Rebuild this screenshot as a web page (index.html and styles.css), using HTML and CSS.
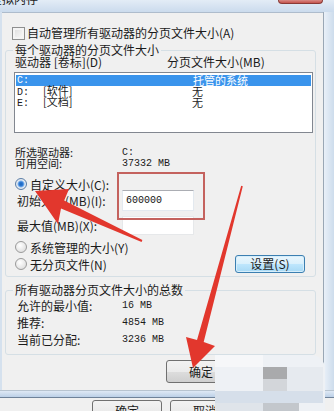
FILE: index.html
```html
<!DOCTYPE html>
<html lang="zh-CN">
<head>
  <meta charset="UTF-8">
  <meta name="viewport" content="width=device-width, initial-scale=1.0">
  <title>虚拟内存</title>
  <link rel="stylesheet" href="styles.css">
</head>
<body>
  <div class="screen">
    <div class="titlebar">
      <span class="title">虚拟内存</span>
      <span class="close"></span>
    </div>

    <div class="body">
      <div class="frame-left"></div>
      <div class="panel">
        <label class="check-row"><span class="checkbox"></span>自动管理所有驱动器的分页文件大小(A)</label>

        <fieldset class="group group-drive">
          <legend>每个驱动器的分页文件大小</legend>
          <div class="list-head">
            <span class="head-drive">驱动器 [卷标](D)</span>
            <span>分页文件大小(MB)</span>
          </div>
          <div class="listbox">
            <div class="list-row selected"><span class="col-drive mono">C:</span><span>托管的系统</span></div>
            <div class="list-row"><span class="col-drive"><span class="mono drive-letter">D:</span>[软件]</span><span>无</span></div>
            <div class="list-row"><span class="col-drive"><span class="mono drive-letter">E:</span>[文档]</span><span>无</span></div>
          </div>

          <div class="info-row first"><span class="info-label">所选驱动器:</span><span class="mono">C:</span></div>
          <div class="info-row"><span class="info-label">可用空间:</span><span class="mono">37332 MB</span></div>

          <div class="radio-row first"><span class="radio on"></span>自定义大小(C):</div>
          <div class="field-row"><span class="field-label">初始大小(MB)(I):</span><span class="input mono">600000</span></div>
          <div class="field-row second"><span class="field-label">最大值(MB)(X):</span><span class="input faint"></span></div>
          <div class="radio-row"><span class="radio"></span>系统管理的大小(Y)</div>
          <div class="radio-row last">
            <span class="radio-label"><span class="radio"></span>无分页文件(N)</span>
            <button class="btn btn-focus">设置(S)</button>
          </div>
        </fieldset>

        <fieldset class="group group-total">
          <legend>所有驱动器分页文件大小的总数</legend>
          <div class="total-row first"><span class="info-label">允许的最小值:</span><span class="mono">16 MB</span></div>
          <div class="total-row"><span class="info-label">推荐:</span><span class="mono">4854 MB</span></div>
          <div class="total-row last"><span class="info-label">当前已分配:</span><span class="mono">3236 MB</span></div>
        </fieldset>

        <div class="ok-row"><button class="btn btn-ok">确定</button></div>
      </div>
      <div class="frame-right"></div>
    </div>

    <div class="frame-bottom"></div>

    <div class="parent-buttons">
      <button class="btn btn-parent">确定</button>
      <button class="btn btn-parent">取消</button>
    </div>

    <!-- annotations drawn over the dialog -->
    <div class="mark-box"></div>

    <div class="blur">
      <span class="blk blk-white"></span>
      <span class="blk blk-light"></span>
      <span class="blk blk-dark"></span>
      <span class="blk blk-mid"></span>
      <span class="blk blk-blue"></span>
      <span class="blk blk-blue2"></span>
      <span class="blk blk-gray"></span>
    </div>

    <svg class="arrows" width="334" height="411" viewBox="0 0 334 411">
      <polygon points="35,191 69,189 64.2,200.5 142.4,240.1 141.6,241.9 61,208.5 58,224" />
      <polygon points="193,368 186,337 197,340.1 241.2,185.8 242.8,186.2 203.7,341.9 215,346" />
    </svg>
  </div>
</body>
</html>
```

FILE: styles.css
```css
* {
  box-sizing: border-box;
}

body {
  margin: 0;
  font-family: "Noto Sans CJK SC", "Noto Sans", sans-serif;
  font-size: 12px;
  color: #1b1b1b;
}

.screen {
  position: relative;
  width: 334px;
  height: 411px;
  overflow: hidden;
  background: #f0f0f0;
}

.mono {
  font-family: "Liberation Mono", "Noto Sans CJK SC", monospace;
  font-size: 10px;
}

/* title bar */
.titlebar {
  display: flex;
  height: 12px;
  overflow: hidden;
  background: linear-gradient(#e3ecf6, #cbdbed);
}

.title {
  margin-top: -8px;
  margin-left: -10px;
  line-height: 14px;
  color: #222;
}

.close {
  margin-left: auto;
  margin-right: 11px;
  width: 45px;
  height: 4px;
  border: 1px solid #8a3a36;
  border-top: none;
  border-radius: 0 0 4px 4px;
  background: linear-gradient(#d98b86, #c5534d);
}

/* window body */
.body {
  display: flex;
  height: 378px;
}

.frame-left {
  width: 2px;
  background: #d5e1ee;
}

.frame-right {
  width: 11px;
  border-left: 1px solid #9aa7b5;
  background: linear-gradient(90deg, #e9f0f8, #cddcec);
}

.panel {
  width: 321px;
  padding: 13px 7px 0 3px;
  border-top: 1px solid #aebccc;
  background: #f0f0f0;
}

.check-row {
  display: flex;
  align-items: center;
  height: 14px;
  padding-left: 7px;
  line-height: 14px;
}

.checkbox {
  width: 13px;
  height: 13px;
  margin-right: 2px;
  border: 1px solid #8e8f8f;
  background: linear-gradient(135deg, #dcdcdc, #fbfbfb);
  box-shadow: inset 0 0 0 2px #f4f4f4;
}

/* group boxes */
.group {
  margin: 0;
  padding: 0;
  border: 1px solid #d5dfe5;
  border-radius: 3px;
}

.group legend {
  margin-left: 7px;
  padding: 0 2px;
  line-height: 12px;
}

.group-drive {
  margin-top: 4px;
  padding-bottom: 3px;
}

.list-head {
  display: flex;
  height: 12px;
  padding-left: 9px;
  line-height: 12px;
}

.head-drive {
  width: 152px;
}

.listbox {
  height: 61px;
  margin: 4px 2px 0 8px;
  padding-top: 2px;
  border: 1px solid #828790;
  background: #fff;
}

.list-row {
  display: flex;
  align-items: center;
  height: 11px;
  padding-left: 2px;
  font-size: 11px;
  line-height: 11px;
}

.list-row.selected {
  margin: 0 1px;
  padding-left: 1px;
  background: #3a94ec;
  color: #fff;
}

.col-drive {
  width: 175px;
}

.list-row.selected .col-drive {
  width: 176px;
}

.drive-letter {
  display: inline-block;
  width: 26px;
}

.info-row {
  display: flex;
  align-items: center;
  height: 11px;
  padding-left: 9px;
  font-size: 11px;
  line-height: 11px;
}

.info-row.first {
  margin-top: 14px;
}

.info-label {
  width: 107px;
}

.radio-row {
  display: flex;
  align-items: center;
  height: 14px;
  margin-top: 4px;
  padding-left: 9px;
}

.radio-row.first {
  margin-top: 8px;
}

.radio-row.last {
  justify-content: space-between;
  height: 18px;
  margin-top: 1px;
  padding-right: 10px;
}

.radio-label {
  display: flex;
  align-items: center;
}

.radio {
  width: 12px;
  height: 12px;
  margin-right: 3px;
  border: 1px solid #9a9a9a;
  border-radius: 50%;
  background: radial-gradient(circle at 40% 35%, #ffffff, #d6d6d6);
}

.radio.on {
  border-color: #5c7fa8;
  background: radial-gradient(circle, #1c64b8 0, #2e7ad6 2px, #7fb2ea 3px, #e9eef4 4px, #d6dce2 6px);
}

.field-row {
  display: flex;
  align-items: center;
  height: 21px;
  margin-top: -1px;
  padding-left: 11px;
}

.field-row.second {
  margin-top: 4px;
}

.field-label {
  width: 105px;
}

.input {
  width: 72px;
  height: 21px;
  padding-left: 3px;
  border: 1px solid #e3e9ef;
  border-top-color: #abadb3;
  background: #fff;
  line-height: 19px;
  color: #111;
}

.input.faint {
  height: 19px;
  border-color: #e6e8ea;
}

/* buttons */
.btn {
  height: 18px;
  padding: 0;
  border: 1px solid #707070;
  border-radius: 3px;
  background: linear-gradient(#f2f2f2 0, #ebebeb 50%, #dddddd 51%, #cfcfcf 100%);
  font-family: "Noto Sans CJK SC", sans-serif;
  font-size: 12px;
  line-height: 16px;
  color: #1b1b1b;
}

.btn-focus {
  width: 70px;
  border-color: #3c7fb1;
  background: linear-gradient(#eaf6fd 0, #d9f0fc 50%, #bee6fd 51%, #a7d9f5 100%);
  box-shadow: inset 0 0 0 1px #d6eefb;
}

.group-total {
  margin-top: 7px;
  padding-bottom: 7px;
}

.total-row {
  display: flex;
  height: 17px;
  padding-left: 11px;
  line-height: 17px;
}

.total-row.first {
  margin-top: 1px;
}

.total-row.last {
  height: 16px;
}

.total-row .info-label {
  width: 105px;
}

.ok-row {
  margin-top: 5px;
  padding-left: 161px;
}

.btn-ok {
  width: 70px;
  height: 23px;
  line-height: 21px;
}

/* window bottom edge and parent dialog */
.frame-bottom {
  height: 8px;
  border-top: 1px solid #b8c4d0;
  border-bottom: 1px solid #6f8299;
  background: linear-gradient(#dfe9f5, #bcd0e7);
}

.parent-buttons {
  display: flex;
  gap: 8px;
  padding: 2px 0 0 92px;
  background: #f0f0f0;
}

.btn-parent {
  width: 70px;
  height: 22px;
  line-height: 18px;
}

/* annotations */
.mark-box {
  position: absolute;
  left: 117px;
  top: 172px;
  width: 88px;
  height: 48px;
  border: 2px solid #c4625e;
}

.arrows {
  position: absolute;
  left: 0;
  top: 0;
  pointer-events: none;
}

.arrows polygon {
  fill: #e2372d;
}

.blur {
  position: absolute;
  left: 215px;
  top: 355px;
  display: grid;
  grid-template-columns: repeat(9, 12px);
  grid-template-rows: repeat(5, 12px);
  width: 110px;
  height: 60px;
  border-radius: 0 14px 0 0;
  overflow: hidden;
  background: #eef1f5;
}

.blk-white {
  grid-column: 1 / 5;
  grid-row: 1 / 2;
  background: #f6f7f9;
}

.blk-light {
  grid-column: 7 / 10;
  grid-row: 2 / 4;
  background: #e6eaef;
}

.blk-dark {
  grid-column: 5 / 7;
  grid-row: 2 / 3;
  background: #a9aaac;
}

.blk-mid {
  grid-column: 5 / 7;
  grid-row: 3 / 4;
  background: #d3d6da;
}

.blk-blue {
  grid-column: 1 / 10;
  grid-row: 4 / 5;
  background: #d6dfea;
}

.blk-blue2 {
  grid-column: 1 / 5;
  grid-row: 5 / 6;
  background: #dfe4ea;
}

.blk-gray {
  grid-column: 5 / 8;
  grid-row: 5 / 6;
  background: #c3c7cc;
}
```
